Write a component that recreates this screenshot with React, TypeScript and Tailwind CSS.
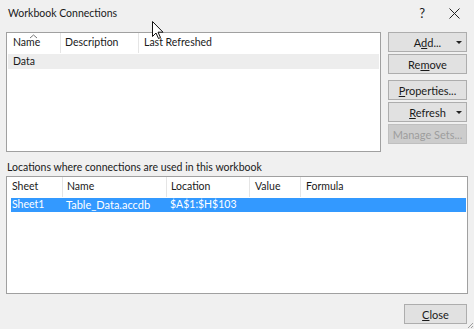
import React from "react";

const font = { fontFamily: 'Lato, "Noto Sans", sans-serif' };

function Btn({ children, arrow, disabled, className = "" }: { children: React.ReactNode; arrow?: boolean; disabled?: boolean; className?: string }) {
  return (
    <div
      className={`relative flex items-center justify-center h-[20px] border text-[11px] leading-none whitespace-nowrap ${
        disabled ? "bg-[#cccccc] border-[#bfbfbf] text-[#9d9d9d]" : "bg-[#e1e1e1] border-[#adadad] text-[#1a1a1a]"
      } ${className}`}
    >
      <span>{children}</span>
      {arrow && (
        <span className="absolute right-[4px] top-[8px] w-0 h-0 border-l-[3px] border-r-[3px] border-t-[3px] border-l-transparent border-r-transparent border-t-[#222]" />
      )}
    </div>
  );
}

export default function App() {
  return (
    <div className="relative w-[474px] h-[329px] bg-[#f0f0f0] overflow-hidden text-[#1a1a1a]" style={font}>
      {/* title bar */}
      <div className="flex items-center h-[27px] pl-[8px] pr-[14px]">
        <span className="text-[10.5px]">Workbook Connections</span>
        <div className="ml-auto flex items-center gap-[24px] text-[13px]">
          <span>?</span>
          <svg width="11" height="11" viewBox="0 0 11 11"><path d="M0.5 0.5 L10.5 10.5 M10.5 0.5 L0.5 10.5" stroke="#222" strokeWidth="1" /></svg>
        </div>
      </div>

      {/* top section */}
      <div className="flex mt-[5px] pl-[6px]">
        <div className="w-[375px] h-[120px] bg-white border border-[#a0a0a0] relative">
          <div className="flex h-[20px] items-center text-[10.5px]">
            <div className="w-[53px] pl-[6px] h-full flex items-center relative">
              Name
              <svg className="absolute left-[22px] top-[1px]" width="9" height="5" viewBox="0 0 9 5"><path d="M1 4 L4.5 1 L8 4" stroke="#777" fill="none" strokeWidth="1" /></svg>
            </div>
            <div className="w-px h-full bg-[#e5e5e5]" />
            <div className="w-[77px] pl-[4px]">Description</div>
            <div className="w-px h-full bg-[#e5e5e5]" />
            <div className="pl-[5px]">Last Refreshed</div>
          </div>
          <div className="h-[15px] bg-[#ededed] mx-[1px] mt-[1px] pl-[5px] flex items-center text-[10.5px]">Data</div>
        </div>
        <div className="ml-[7px] w-[79px] flex flex-col">
          <Btn arrow>A<u>d</u>d...</Btn>
          <Btn className="mt-[2px]">Re<u>m</u>ove</Btn>
          <Btn className="mt-[6px]"><u>P</u>roperties...</Btn>
          <Btn arrow className="mt-[2px]"><u>R</u>efresh</Btn>
          <Btn disabled className="mt-[2px]">Manage Sets...</Btn>
        </div>
      </div>

      {/* label */}
      <div className="pl-[7px] mt-[8px] text-[10.5px] h-[15px] leading-[15px]">Locations where connections are used in this workbook</div>

      {/* bottom list */}
      <div className="ml-[6px] mt-[1px] w-[462px] h-[118px] bg-white border border-[#a0a0a0]">
        <div className="flex h-[20px] items-center text-[10.5px]">
          <div className="w-[55px] pl-[5px]">Sheet</div>
          <div className="w-px h-full bg-[#e5e5e5]" />
          <div className="w-[103px] pl-[4px]">Name</div>
          <div className="w-px h-full bg-[#e5e5e5]" />
          <div className="w-[82px] pl-[4px]">Location</div>
          <div className="w-px h-full bg-[#e5e5e5]" />
          <div className="w-[50px] pl-[5px]">Value</div>
          <div className="w-px h-full bg-[#e5e5e5]" />
          <div className="pl-[5px]">Formula</div>
        </div>
        <div className="flex h-[14px] items-center ml-[4px] mr-[1px] mt-[1px] bg-[#3399ff] text-white text-[10.5px]">
          <div className="w-[52px] pl-[1px]">Sheet1</div>
          <div className="w-[104px] pl-[3px] text-[11px]">Table_Data.accdb</div>
          <div className="pl-[3px]">$A$1:$H$103</div>
        </div>
      </div>

      {/* close */}
      <div className="flex justify-end pr-[7px] mt-[10px]">
        <Btn className="w-[63px] h-[19px]"><u>C</u>lose</Btn>
      </div>

      {/* cursor */}
      <svg className="absolute left-[152px] top-[21px]" width="12" height="19" viewBox="0 0 12 19">
        <path d="M0.5 0.5 L0.5 15.5 L4 12 L6.5 17.5 L8.5 16.5 L6 11.2 L11 11.2 Z" fill="white" stroke="#111" strokeWidth="1" strokeLinejoin="round" />
      </svg>

      {/* resize grip */}
      <svg className="absolute right-0 bottom-0" width="8" height="8" viewBox="0 0 8 8">
        <path d="M7 2 L2 7 M7 5 L5 7" stroke="#a0a0a0" strokeWidth="1" />
      </svg>
    </div>
  );
}
